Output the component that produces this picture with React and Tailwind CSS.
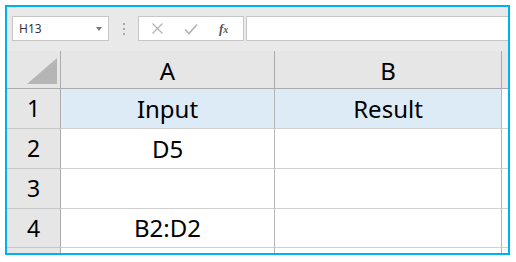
import React from 'react';

const font = { fontFamily: '"Noto Sans", "Open Sans", sans-serif' };

const rows = [
  { n: '1', a: 'Input', b: 'Result', head: true, h: 'h-[40px]' },
  { n: '2', a: 'D5', b: '', h: 'h-[40px]' },
  { n: '3', a: '', b: '', h: 'h-[40px]' },
  { n: '4', a: 'B2:D2', b: '', h: 'h-[39px]' },
];

const Toolbar = () => (
  <div className="h-[44px] shrink-0 bg-[#e9e9e9] flex items-start pt-[9px] pl-[5px]">
    <div className="w-[97px] h-[25px] bg-white border border-[#c6c6c6] flex items-center justify-between pl-[6px] pr-[6px]">
      <span className="text-[12px] text-[#333]">H13</span>
      <svg width="6" height="4" viewBox="0 0 6 4">
        <polygon points="0,0 6,0 3,4" fill="#7a7a7a" />
      </svg>
    </div>
    <div className="w-[29px] h-[25px] flex flex-col items-center justify-center gap-[3px]">
      <span className="w-[2px] h-[2px] bg-[#a8a8a8]" />
      <span className="w-[2px] h-[2px] bg-[#a8a8a8]" />
      <span className="w-[2px] h-[2px] bg-[#a8a8a8]" />
    </div>
    <div className="w-[106px] h-[25px] bg-white border border-[#c6c6c6] flex items-center">
      <svg className="ml-[12px]" width="13" height="13" viewBox="0 0 13 13">
        <path d="M1.5 1.5 L11.5 11.5 M11.5 1.5 L1.5 11.5" stroke="#b3b3b3" strokeWidth="1.3" fill="none" />
      </svg>
      <svg className="ml-[20px]" width="14" height="12" viewBox="0 0 14 12">
        <path d="M1 6.5 L5 10.5 L13 1.5" stroke="#b3b3b3" strokeWidth="1.6" fill="none" />
      </svg>
      <span
        className="ml-[21px] text-[13px] italic font-bold text-[#555] leading-none"
        style={{ fontFamily: '"Liberation Serif", serif' }}
      >
        f<span className="text-[10px]">x</span>
      </span>
    </div>
    <div className="ml-[2px] flex-1 h-[25px] bg-white border border-[#c6c6c6] border-r-0" />
  </div>
);

export default function App() {
  return (
    <div className="w-[516px] h-[262px] bg-white pt-[5px] pl-[5px]" style={font}>
      <div className="w-[505px] h-[250px] border-2 border-[#00b0f0] bg-[#e6e6e6] overflow-hidden flex flex-col">
        <Toolbar />
        <div className="grid grid-cols-[54px_214px_227px_1fr] shrink-0">
          <div className="h-[38px] bg-[#e6e6e6] border-r border-b border-[#ababab] flex items-end justify-end pr-[3px] pb-[4px]">
            <svg width="30" height="26" viewBox="0 0 30 26">
              <polygon points="30,0 30,26 0,26" fill="#b5b5b5" />
            </svg>
          </div>
          <div className="h-[38px] bg-[#e6e6e6] border-r border-b border-[#ababab] flex items-center justify-center text-[24px] text-black pt-[3px]">A</div>
          <div className="h-[38px] bg-[#e6e6e6] border-r border-b border-[#ababab] flex items-center justify-center text-[24px] text-black pt-[3px]">B</div>
          <div className="h-[38px] bg-[#e6e6e6] border-b border-[#ababab]" />
          {rows.map((r) => (
            <React.Fragment key={r.n}>
              <div className={`${r.h} bg-[#e6e6e6] border-r border-b border-r-[#ababab] border-b-[#c8c8c8] flex items-center justify-center text-[23px] text-black`}>
                {r.n}
              </div>
              <div className={`${r.h} ${r.head ? 'bg-[#ddebf7]' : 'bg-white'} border-r border-b border-r-[#b5b5b5] border-b-[#d0d0d0] flex items-center justify-center text-[24px] text-black`}>
                {r.a}
              </div>
              <div className={`${r.h} ${r.head ? 'bg-[#ddebf7]' : 'bg-white'} border-r border-b border-r-[#b5b5b5] border-b-[#d0d0d0] flex items-center justify-center text-[24px] text-black`}>
                {r.b}
              </div>
              <div className={`${r.h} bg-white border-b border-[#d0d0d0]`} />
            </React.Fragment>
          ))}
          <div className="h-[10px] bg-[#e6e6e6] border-r border-[#ababab]" />
          <div className="h-[10px] bg-white border-r border-[#b5b5b5]" />
          <div className="h-[10px] bg-white border-r border-[#b5b5b5]" />
          <div className="h-[10px] bg-white" />
        </div>
      </div>
    </div>
  );
}
